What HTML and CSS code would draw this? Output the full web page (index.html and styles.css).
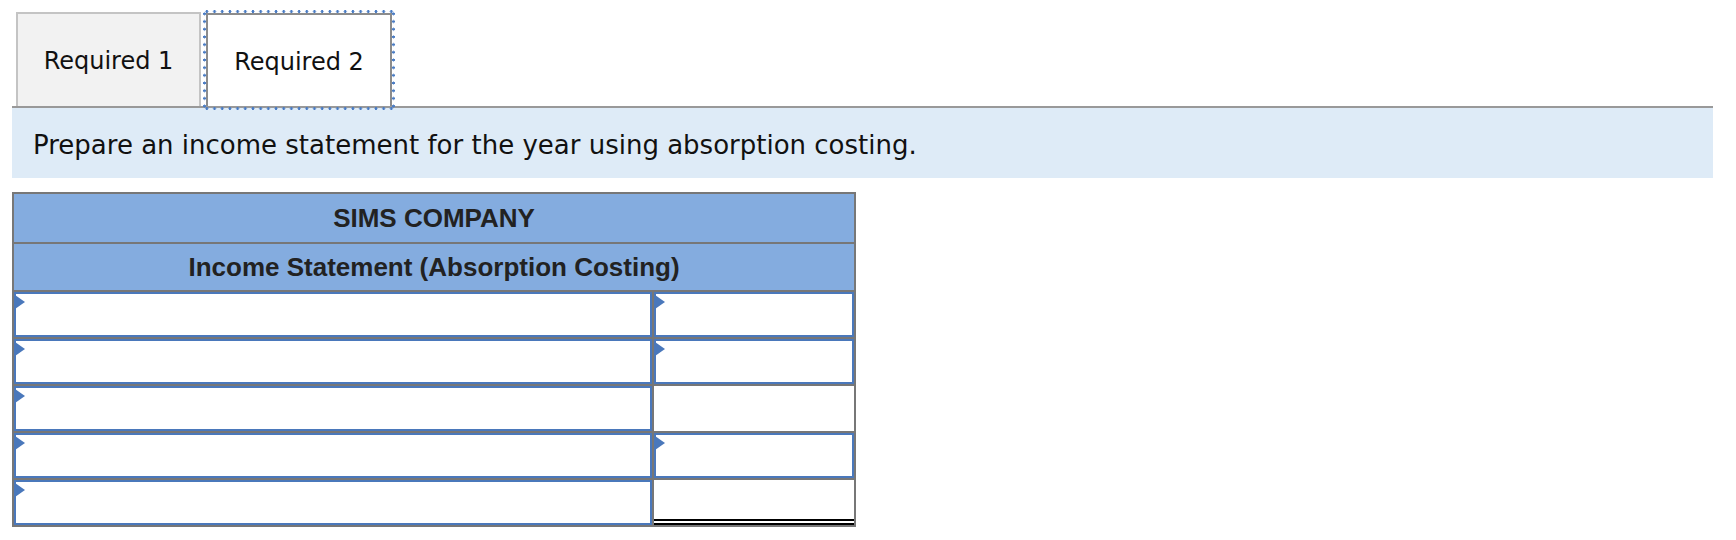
FILE: index.html
```html
<!DOCTYPE html>
<html>
<head>
<meta charset="utf-8">
<link rel="stylesheet" href="styles.css">
</head>
<body>
<div class="wrap">
  <div class="tabs">
    <div class="tab tab-inactive">Required 1</div>
    <div class="tab tab-active">Required 2</div>
  </div>
  <div class="prompt">Prepare an income statement for the year using absorption costing.</div>
  <table class="stmt">
    <colgroup><col class="col-label"><col class="col-amt"></colgroup>
    <tr class="head head1"><th colspan="2">SIMS COMPANY</th></tr>
    <tr class="head head2"><th colspan="2">Income Statement (Absorption Costing)</th></tr>
    <tr class="r r1">
      <td><div class="field"><span class="tri"></span></div></td>
      <td><div class="field"><span class="tri"></span></div></td>
    </tr>
    <tr class="r r2">
      <td><div class="field"><span class="tri"></span></div></td>
      <td><div class="field"><span class="tri"></span></div></td>
    </tr>
    <tr class="r r3">
      <td><div class="field"><span class="tri"></span></div></td>
      <td class="plain"><div class="total single"></div></td>
    </tr>
    <tr class="r r4">
      <td><div class="field"><span class="tri"></span></div></td>
      <td><div class="field"><span class="tri"></span></div></td>
    </tr>
    <tr class="r r5">
      <td><div class="field"><span class="tri"></span></div></td>
      <td class="plain"><div class="total double"></div></td>
    </tr>
  </table>
</div>
</body>
</html>
```
FILE: styles.css
```css
html, body {
  margin: 0;
  padding: 0;
  background: #fff;
}
.wrap {
  padding: 12px 23px 0 12px;
}
.tabs {
  display: flex;
  align-items: flex-end;
  padding-left: 4px;
  border-bottom: 2px solid #999;
  height: 94px;
}
.tab {
  box-sizing: border-box;
  height: 94px;
  display: flex;
  align-items: center;
  justify-content: center;
  padding-top: 2px;
  font-family: "DejaVu Sans", Verdana, sans-serif;
  font-size: 24px;
  color: #111;
  border: 2px solid #c4c4c4;
  border-bottom: none;
}
.tab-inactive {
  width: 185px;
  background: #f2f2f2;
}
.tab-active {
  position: relative;
  width: 186px;
  height: 93px;
  margin-left: 5px;
  background: #fff;
  border-color: #8c8c8c;
}
.tab-active::before {
  content: "";
  position: absolute;
  left: -5px;
  right: -5px;
  top: -5px;
  bottom: -4px;
  pointer-events: none;
  background:
    radial-gradient(circle, #4a7cc4 1.2px, transparent 1.7px) 0 0 / 7.7px 3px repeat-x,
    radial-gradient(circle, #4a7cc4 1.2px, transparent 1.7px) 0 100% / 7.7px 3px repeat-x,
    radial-gradient(circle, #4a7cc4 1.2px, transparent 1.7px) 0 0 / 3px 7.7px repeat-y,
    radial-gradient(circle, #4a7cc4 1.2px, transparent 1.7px) 100% 0 / 3px 7.7px repeat-y;
}
.prompt {
  background: #deebf7;
  height: 70px;
  box-sizing: border-box;
  padding-top: 3px;
  display: flex;
  align-items: center;
  padding-left: 21px;
  font-family: "DejaVu Sans", Verdana, sans-serif;
  font-size: 26px;
  color: #111;
}
.stmt {
  margin-top: 14px;
  width: 842px;
  border-collapse: collapse;
  border: 2px solid #777;
  table-layout: fixed;
}
.col-label { width: 640px; }
.col-amt { width: 202px; }
.stmt th {
  background: #84acdf;
  border: 2px solid #777;
  font-family: "Liberation Sans", Arial, sans-serif;
  font-weight: bold;
  font-size: 26px;
  color: #222;
  padding: 0;
  text-align: center;
}
.head1 { height: 50px; }
.head2 { height: 48px; }
.stmt td {
  border: 2px solid #777;
  padding: 0;
  height: 45px;
}
.r .field {
  position: relative;
  box-sizing: border-box;
  height: 45px;
  border: 2px solid #4a78bb;
  background: #fff;
}
.tri {
  position: absolute;
  left: -1px;
  top: 1px;
  width: 0;
  height: 0;
  border-left: 10px solid #4a78bb;
  border-top: 7px solid transparent;
  border-bottom: 7px solid transparent;
}
.stmt td.plain {
  border-top: 2px solid #000;
}
.total {
  box-sizing: border-box;
  height: 45px;
}
.total.double {
  border-bottom: 6px double #000;
}
```
